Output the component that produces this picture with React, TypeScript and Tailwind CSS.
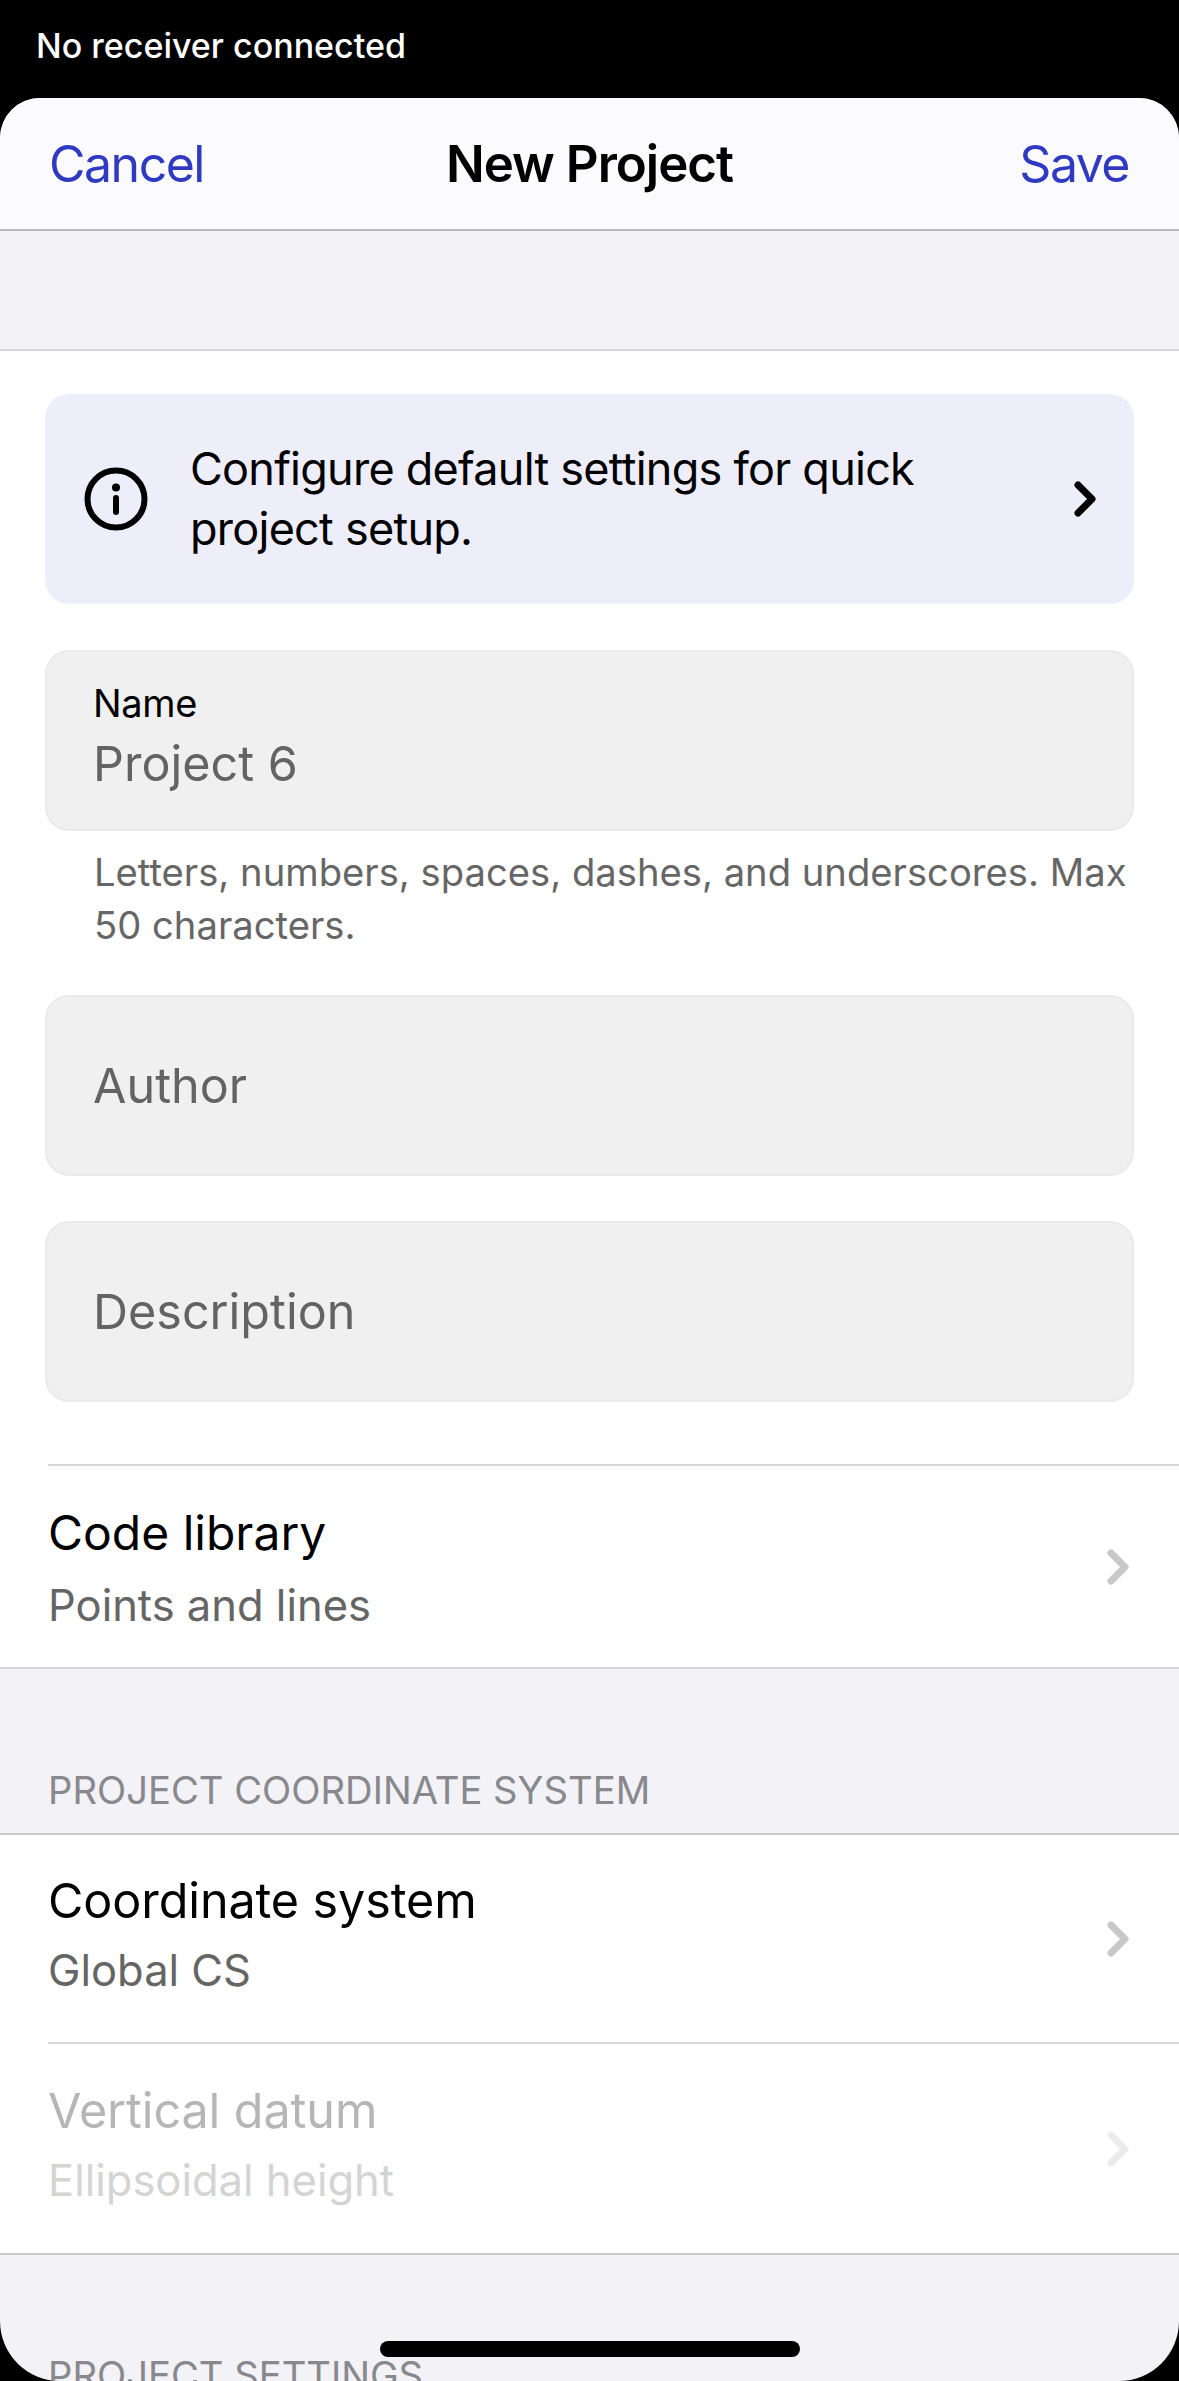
import React from "react";

function Chevron({ className }: { className: string }) {
  return (
    <svg width="22" height="36" viewBox="0 0 22 36" fill="none" className={className}>
      <path d="M4 4L18 18L4 32" stroke="currentColor" strokeWidth="7" strokeLinecap="round" strokeLinejoin="round" />
    </svg>
  );
}

function InfoIcon() {
  return (
    <svg width="64" height="64" viewBox="0 0 64 64" fill="none" className="shrink-0">
      <circle cx="32" cy="32" r="28.5" stroke="black" strokeWidth="6" />
      <circle cx="32" cy="20.5" r="4" fill="black" />
      <path d="M32 31V45" stroke="black" strokeWidth="6" strokeLinecap="round" />
    </svg>
  );
}

function Field({ label, value }: { label?: string; value: string }) {
  return (
    <div className="h-[181px] rounded-[24px] bg-[#f0f0f0] border-2 border-[#eaeaea] px-[46px] flex flex-col justify-center">
      {label && <div className="text-[38px] leading-[44px] tracking-[-0.3px] text-black pb-[9px] -mt-[7px]">{label}</div>}
      <div className="text-[48.5px] leading-[60px] text-[#636363]">{value}</div>
    </div>
  );
}

function Row({ title, sub, disabled, last }: { title: string; sub: string; disabled?: boolean; last?: boolean }) {
  return (
    <div className="pl-[48px]">
      <div className={`h-[209px] flex items-center pr-[50px] ${last ? "" : "border-b-2 border-[#d8d8dc]"}`}>
        <div className="flex-1 pb-[7px]">
          <div className={`text-[48.5px] leading-[62px] tracking-[-0.1px] ${disabled ? "text-[#b6b6b6]" : "text-black"}`}>{title}</div>
          <div className={`text-[43.5px] leading-[62px] mt-[7px] ${disabled ? "text-[#d4d4d4]" : "text-[#656565]"}`}>{sub}</div>
        </div>
        <Chevron className={disabled ? "text-[#ebebeb]" : "text-[#c8c8c8]"} />
      </div>
    </div>
  );
}

function SectionHeader({ children }: { children: string }) {
  return (
    <div className="h-[166px] flex items-end pl-[48px] pb-[19px] text-[38.2px] leading-[48px] text-[#88888d] border-b-2 border-[#c8c8cf]">
      {children}
    </div>
  );
}

export default function App() {
  return (
    <div className="relative h-[2381px] w-[1179px] overflow-hidden bg-black flex flex-col font-['Inter',sans-serif]">
      <div className="h-[98px] shrink-0 pl-[36px] pt-[26px] text-[34px] leading-[40px] font-medium text-white">
        No receiver connected
      </div>

      <div className="flex-1 min-h-0 overflow-hidden rounded-t-[40px] rounded-b-[60px] bg-[#f2f2f7]">
        <div className="relative h-[133px] bg-[#fbfbfd] border-b-2 border-[#b8b8bb] flex items-center justify-between pl-[49px] pr-[50px] pt-[2px]">
          <span className="text-[50px] tracking-[-1.5px] text-[#3039c1]">Cancel</span>
          <span className="absolute left-0 right-0 text-center text-[51px] tracking-[-1px] font-semibold text-black">New Project</span>
          <span className="text-[50px] tracking-[-1.5px] text-[#3039c1]">Save</span>
        </div>

        <div className="h-[118px]" />

        <div className="bg-white border-t-2 border-b-2 border-[#d5d5da]">
          <div className="px-[45px] pt-[43px] pb-[62px] flex flex-col">
            <div className="h-[210px] rounded-[24px] bg-[#eeeefa] flex items-center pl-[39px] pr-[38px]">
              <InfoIcon />
              <div className="flex-1 ml-[42px] pr-[60px] text-[45px] leading-[60px] tracking-[-0.75px] text-black">
                Configure default settings for quick project setup.
              </div>
              <Chevron className="text-black" />
            </div>

            <div className="mt-[46px]">
              <Field label="Name" value="Project 6" />
            </div>
            <div className="mt-[15px] pl-[49px] text-[38.2px] leading-[53px] text-[#666666]">
              Letters, numbers, spaces, dashes, and underscores. Max 50 characters.
            </div>
            <div className="mt-[43px]">
              <Field value="Author" />
            </div>
            <div className="mt-[45px]">
              <Field value="Description" />
            </div>
          </div>

          <div className="pl-[48px]">
            <div className="h-[203px] flex items-center pr-[50px] border-t-2 border-[#d8d8dc]">
              <div className="flex-1 pt-[4px]">
                <div className="text-[48px] leading-[62px] text-black">Code library</div>
                <div className="text-[43.5px] leading-[62px] mt-[10px] text-[#656565]">Points and lines</div>
              </div>
              <Chevron className="text-[#c8c8c8]" />
            </div>
          </div>
        </div>

        <SectionHeader>PROJECT COORDINATE SYSTEM</SectionHeader>

        <div className="bg-white border-b-2 border-[#c8c8cf]">
          <Row title="Coordinate system" sub="Global CS" />
          <Row title="Vertical datum" sub="Ellipsoidal height" disabled last />
        </div>

        <div className="h-[167px] flex items-end pl-[48px] pb-[23px] text-[38.2px] leading-[48px] text-[#88888d]">
          PROJECT SETTINGS
        </div>
      </div>

      {/* home indicator */}
      <div className="absolute left-[380px] top-[2341px] h-[16px] w-[420px] rounded-full bg-black" />
    </div>
  );
}
